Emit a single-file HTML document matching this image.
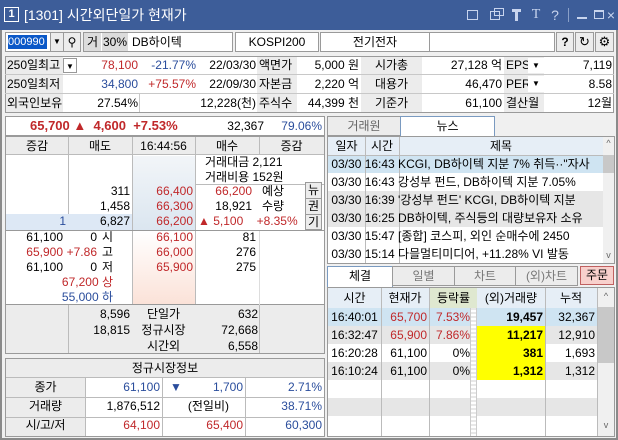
<!DOCTYPE html>
<html><head><meta charset="utf-8"><style>
*{margin:0;padding:0;box-sizing:border-box}
body{width:618px;height:440px;overflow:hidden;background:#f0f0f0;font-family:"Liberation Sans","Noto Sans CJK KR",sans-serif;font-size:12px;color:#000;position:relative}
.a{position:absolute;white-space:nowrap;overflow:hidden}
.b{border:1px solid #9a9a9a}
.r{text-align:right}.c{text-align:center}
.red{color:#c0282a}.blue{color:#2a4d9c}
.g{background:#ececec}
.w{background:#fff}
.ti{position:absolute;top:6px;color:#c8d4ee;font-size:14px;line-height:18px;width:16px;text-align:center}
</style></head><body>
<div class="a" style="left:0;top:0;width:618px;height:440px;border:2px solid #8a8a8a;background:#f0f0f0"></div>
<div class="a" style="left:0;top:0;width:618px;height:30px;background:#3d5d99;color:#fff;font-size:14px;line-height:30px;padding-left:24px">[1301] 시간외단일가 현재가</div>
<div class="a" style="left:4px;top:7px;width:15px;height:15px;border:1px solid #fff;color:#fff;font-size:11px;line-height:13px;text-align:center;font-weight:bold">1</div>
<div class="a" style="left:467px;top:10px;width:11px;height:10px;border:1px solid #c8d4ee"></div>
<div class="a" style="left:490px;top:11px;width:10px;height:9px;border:1px solid #c8d4ee"></div>
<div class="a" style="left:494px;top:8px;width:10px;height:8px;border:1px solid #c8d4ee"></div>
<div class="a" style="left:512px;top:9px;width:9px;height:3px;background:#c8d4ee"></div>
<div class="a" style="left:515px;top:12px;width:3px;height:9px;background:#c8d4ee"></div>
<div class="ti" style="left:528px;font-family:'Liberation Serif',serif">T</div>
<div class="ti" style="left:547px">?</div>
<div class="a" style="left:568px;top:8px;width:1px;height:14px;background:#8aa0c8"></div>
<div class="a" style="left:577px;top:17px;width:10px;height:2px;background:#c8d4ee"></div>
<div class="a" style="left:594px;top:10px;width:10px;height:9px;border:1px solid #c8d4ee;border-top-width:2px"></div>
<div class="ti" style="left:603px">×</div>

<!-- toolbar -->
<div class="a b w" style="left:5px;top:32px;width:46px;height:20px"></div>
<div class="a" style="left:8px;top:35px;width:39px;height:14px;background:#0a58c8;color:#fff;font-size:11px;line-height:14px">000990</div>
<div class="a b g c" style="left:50px;top:32px;width:14px;height:20px;font-size:8px;line-height:18px">▼</div>
<div class="a b g c" style="left:63px;top:32px;width:18px;height:20px;font-size:12px;line-height:18px">⚲</div>
<div class="a b w" style="left:83px;top:32px;width:150px;height:20px"></div>
<div class="a" style="left:84px;top:33px;width:17px;height:18px;background:#dcdcdc;line-height:18px;text-align:center">거</div>
<div class="a" style="left:102px;top:33px;width:26px;height:18px;background:#dcdcdc;line-height:18px;text-align:center">30%</div>
<div class="a" style="left:132px;top:33px;line-height:18px">DB하이텍</div>
<div class="a b w c" style="left:235px;top:32px;width:84px;height:20px;line-height:18px">KOSPI200</div>
<div class="a b w c" style="left:320px;top:32px;width:110px;height:20px;line-height:18px">전기전자</div>
<div class="a b w" style="left:429px;top:32px;width:126px;height:20px"></div>
<div class="a b g c" style="left:556px;top:32px;width:18px;height:20px;line-height:18px;font-weight:bold">?</div>
<div class="a b g c" style="left:575px;top:32px;width:19px;height:20px;line-height:18px;font-size:13px">↻</div>
<div class="a b g c" style="left:595px;top:32px;width:19px;height:20px;line-height:18px;font-size:13px">⚙</div>

<!-- info table -->
<div class="a b w" style="left:5px;top:56px;width:609px;height:57px"></div>
<div class="a g" style="left:6px;top:57px;width:57px;height:55px"></div>
<div class="a g" style="left:257px;top:57px;width:40px;height:55px"></div>
<div class="a g" style="left:361px;top:57px;width:61px;height:55px"></div>
<div class="a g" style="left:504px;top:57px;width:40px;height:55px"></div>
<div class="a" style="left:5px;top:74px;width:609px;height:1px;background:#c8c8c8"></div>
<div class="a" style="left:5px;top:93px;width:609px;height:1px;background:#c8c8c8"></div>
<div class="a" style="left:7px;top:57px;line-height:17px">250일최고</div>
<div class="a w c" style="left:63px;top:58px;width:14px;height:15px;font-size:8px;line-height:15px;border:1px solid #999">▼</div>
<div class="a" style="left:7px;top:75px;line-height:18px">250일최저</div>
<div class="a" style="left:7px;top:94px;line-height:18px">외국인보유</div>
<div class="a r red" style="left:78px;top:57px;width:60px;line-height:17px">78,100</div>
<div class="a r blue" style="left:138px;top:57px;width:58px;line-height:17px">-21.77%</div>
<div class="a r" style="left:196px;top:57px;width:60px;line-height:17px">22/03/30</div>
<div class="a r blue" style="left:78px;top:75px;width:60px;line-height:18px">34,800</div>
<div class="a r red" style="left:138px;top:75px;width:58px;line-height:18px">+75.57%</div>
<div class="a r" style="left:196px;top:75px;width:60px;line-height:18px">22/09/30</div>
<div class="a r" style="left:78px;top:94px;width:60px;line-height:18px">27.54%</div>
<div class="a r" style="left:140px;top:94px;width:116px;line-height:18px">12,228(천)</div>
<div class="a" style="left:139px;top:94px;width:1px;height:18px;background:#c8c8c8"></div>
<div class="a" style="left:259px;top:57px;line-height:17px">액면가</div>
<div class="a" style="left:259px;top:75px;line-height:18px">자본금</div>
<div class="a" style="left:259px;top:94px;line-height:18px">주식수</div>
<div class="a r" style="left:297px;top:57px;width:62px;line-height:17px">5,000 원</div>
<div class="a r" style="left:297px;top:75px;width:62px;line-height:18px">2,220 억</div>
<div class="a r" style="left:297px;top:94px;width:62px;line-height:18px">44,399 천</div>
<div class="a c" style="left:361px;top:57px;width:61px;line-height:17px">시가총</div>
<div class="a c" style="left:361px;top:75px;width:61px;line-height:18px">대용가</div>
<div class="a c" style="left:361px;top:94px;width:61px;line-height:18px">기준가</div>
<div class="a r" style="left:422px;top:57px;width:80px;line-height:17px">27,128 억</div>
<div class="a r" style="left:422px;top:75px;width:80px;line-height:18px">46,470</div>
<div class="a r" style="left:422px;top:94px;width:80px;line-height:18px">61,100</div>
<div class="a" style="left:506px;top:57px;line-height:17px">EPS</div>
<div class="a" style="left:506px;top:75px;line-height:18px">PER</div>
<div class="a" style="left:506px;top:94px;line-height:18px">결산월</div>
<div class="a w c" style="left:528px;top:58px;width:16px;height:15px;font-size:8px;line-height:15px">▼</div>
<div class="a w c" style="left:528px;top:76px;width:16px;height:16px;font-size:8px;line-height:16px">▼</div>
<div class="a r" style="left:545px;top:57px;width:67px;line-height:17px">7,119</div>
<div class="a r" style="left:545px;top:75px;width:67px;line-height:18px">8.58</div>
<div class="a r" style="left:545px;top:94px;width:67px;line-height:18px">12월</div>

<!-- price bar -->
<div class="a b w" style="left:5px;top:116px;width:320px;height:20px"></div>
<div class="a red" style="left:30px;top:117px;line-height:18px;font-weight:bold;font-size:13px">65,700 ▲ &nbsp;4,600 &nbsp;+7.53%</div>
<div class="a r" style="left:220px;top:117px;width:44px;line-height:18px">32,367</div>
<div class="a r blue" style="left:264px;top:117px;width:58px;line-height:18px">79.06%</div>

<!-- orderbook -->
<div class="a b w" style="left:5px;top:136px;width:320px;height:218px"></div>
<div class="a g" style="left:6px;top:137px;width:318px;height:18px;border-bottom:1px solid #bbb"></div>
<div class="a c" style="left:6px;top:137px;width:62px;line-height:18px">증감</div>
<div class="a c" style="left:68px;top:137px;width:64px;line-height:18px">매도</div>
<div class="a c" style="left:132px;top:137px;width:63px;line-height:18px">16:44:56</div>
<div class="a c" style="left:195px;top:137px;width:64px;line-height:18px">매수</div>
<div class="a c" style="left:259px;top:137px;width:65px;line-height:18px">증감</div>
<div class="a" style="left:68px;top:137px;width:1px;height:93px;background:#bbb"></div>
<div class="a" style="left:132px;top:137px;width:1px;height:216px;background:#bbb"></div>
<div class="a" style="left:195px;top:137px;width:1px;height:216px;background:#bbb"></div>
<div class="a" style="left:259px;top:137px;width:1px;height:18px;background:#bbb"></div>
<div class="a" style="left:133px;top:156px;width:62px;height:74px;background:linear-gradient(#f2f5f8,#dbe6f0)"></div>
<div class="a" style="left:133px;top:231px;width:62px;height:73px;background:linear-gradient(#fff,#fbe2d8)"></div>
<div class="a" style="left:6px;top:214px;width:126px;height:16px;background:#dde8f5"></div>
<div class="a" style="left:6px;top:230px;width:318px;height:1px;background:#999"></div>
<div class="a" style="left:6px;top:304px;width:318px;height:1px;background:#999"></div>
<div class="a g" style="left:6px;top:305px;width:318px;height:48px"></div>
<div class="a" style="left:68px;top:305px;width:1px;height:48px;background:#bbb"></div>
<div class="a" style="left:259px;top:305px;width:1px;height:48px;background:#bbb"></div>
<div class="a" style="left:259px;top:231px;width:1px;height:74px;background:#ddd"></div>
<div class="a" style="left:196px;top:184px;width:128px;height:1px;background:#bbb"></div>
<div class="a" style="left:205px;top:155px;line-height:15px">거래대금 2,121<br>거래비용 152원</div>
<div class="a r" style="left:68px;top:184px;width:62px;line-height:15px">311<br>1,458<br>6,827</div>
<div class="a r red" style="left:132px;top:184px;width:61px;line-height:15px">66,400<br>66,300<br>66,200</div>
<div class="a r blue" style="left:6px;top:214px;width:60px;line-height:15px">1</div>
<div class="a r red" style="left:196px;top:184px;width:56px;line-height:15px">66,200</div>
<div class="a" style="left:262px;top:184px;line-height:15px">예상</div>
<div class="a r" style="left:196px;top:199px;width:56px;line-height:15px">18,921</div>
<div class="a" style="left:262px;top:199px;line-height:15px">수량</div>
<div class="a red" style="left:198px;top:214px;line-height:15px">▲ 5,100 &nbsp;&nbsp;&nbsp;+8.35%</div>
<div class="a b g c" style="left:305px;top:182px;width:17px;height:17px;line-height:15px">뉴</div>
<div class="a b g c" style="left:305px;top:198px;width:17px;height:17px;line-height:15px">권</div>
<div class="a b g c" style="left:305px;top:214px;width:17px;height:16px;line-height:14px">기</div>
<div class="a r" style="left:6px;top:230px;width:57px;line-height:15px">61,100<br><span class="red">65,900</span><br>61,100</div>
<div class="a r" style="left:63px;top:230px;width:34px;line-height:15px">0<br><span class="red">+7.86</span><br>0</div>
<div class="a" style="left:102px;top:230px;line-height:15px">시<br>고<br>저</div>
<div class="a r red" style="left:6px;top:275px;width:107px;line-height:15px">67,200 상</div>
<div class="a r blue" style="left:6px;top:290px;width:107px;line-height:15px">55,000 하</div>
<div class="a r red" style="left:132px;top:230px;width:61px;line-height:15px">66,100<br>66,000<br>65,900</div>
<div class="a r" style="left:196px;top:230px;width:60px;line-height:15px">81<br>276<br>275</div>
<div class="a r" style="left:68px;top:306px;width:62px;line-height:16px">8,596<br>18,815</div>
<div class="a c" style="left:132px;top:306px;width:63px;line-height:16px">단일가<br>정규시장<br>시간외</div>
<div class="a r" style="left:196px;top:306px;width:62px;line-height:16px">632<br>72,668<br>6,558</div>

<!-- 정규시장정보 -->
<div class="a b w" style="left:5px;top:358px;width:320px;height:79px"></div>
<div class="a g c" style="left:6px;top:359px;width:318px;height:19px;line-height:19px;border-bottom:1px solid #bbb">정규시장정보</div>
<div class="a g" style="left:6px;top:378px;width:79px;height:58px"></div>
<div class="a" style="left:6px;top:397px;width:318px;height:1px;background:#bbb"></div>
<div class="a" style="left:6px;top:417px;width:318px;height:1px;background:#bbb"></div>
<div class="a" style="left:85px;top:378px;width:1px;height:58px;background:#bbb"></div>
<div class="a" style="left:162px;top:378px;width:1px;height:58px;background:#bbb"></div>
<div class="a" style="left:245px;top:378px;width:1px;height:58px;background:#bbb"></div>
<div class="a c" style="left:6px;top:378px;width:79px;line-height:19px">종가<br>거래량<br>시/고/저</div>
<div class="a r" style="left:85px;top:378px;width:75px;line-height:19px"><span class="blue">61,100</span><br>1,876,512<br><span class="red">64,100</span></div>
<div class="a blue" style="left:170px;top:378px;line-height:19px">▼</div>
<div class="a r" style="left:162px;top:378px;width:81px;line-height:19px"><span class="blue">1,700</span><br><span style="padding-right:14px">(전일비)</span><br><span class="red">65,400</span></div>
<div class="a r blue" style="left:245px;top:378px;width:77px;line-height:19px">2.71%<br>38.71%<br>60,300</div>

<!-- right: tabs -->
<div class="a g c b" style="left:327px;top:116px;width:74px;height:20px;line-height:18px;color:#666">거래원</div>
<div class="a w c" style="left:400px;top:116px;width:95px;height:21px;line-height:18px;border:1px solid #7a9ac0;border-bottom:none">뉴스</div>
<div class="a b w" style="left:327px;top:136px;width:288px;height:128px"></div>
<div class="a" style="left:328px;top:137px;width:275px;height:18px;background:#e6eef6"></div>
<div class="a c" style="left:328px;top:137px;width:37px;line-height:18px">일자</div>
<div class="a c" style="left:365px;top:137px;width:34px;line-height:18px">시간</div>
<div class="a c" style="left:399px;top:137px;width:204px;line-height:18px">제목</div>
<div class="a" style="left:328px;top:155px;width:275px;height:18px;background:#cfe4f2"></div>
<div class="a" style="left:328px;top:191px;width:275px;height:18px;background:#e6e6e6"></div>
<div class="a" style="left:328px;top:209px;width:275px;height:18px;background:#e6e6e6"></div>
<div class="a" style="left:365px;top:137px;width:1px;height:126px;background:#bbb"></div>
<div class="a" style="left:399px;top:137px;width:1px;height:126px;background:#bbb"></div>
<div class="a" style="left:328px;top:155px;width:275px;height:1px;background:#bbb"></div>
<div class="a" style="left:328px;top:155px;width:275px;line-height:18px">
<div>&nbsp;03/30 16:43 KCGI, DB하이텍 지분 7% 취득··"자사</div>
<div>&nbsp;03/30 16:43 강성부 펀드, DB하이텍 지분 7.05%</div>
<div>&nbsp;03/30 16:39 '강성부 펀드' KCGI, DB하이텍 지분</div>
<div>&nbsp;03/30 16:25 DB하이텍, 주식등의 대량보유자 소유</div>
<div>&nbsp;03/30 15:47 [종합] 코스피, 외인 순매수에 2450</div>
<div>&nbsp;03/30 15:14 다믈멀티미디어, +11.28% VI 발동</div></div>
<div class="a" style="left:603px;top:137px;width:11px;height:126px;background:#f0f0f0;font-size:9px;color:#666;text-align:center;line-height:12px">^</div>
<div class="a" style="left:603px;top:155px;width:11px;height:18px;background:#c8c8c8"></div>
<div class="a" style="left:603px;top:250px;width:11px;font-size:9px;color:#666;text-align:center">v</div>

<!-- bottom tabs -->
<div class="a w c" style="left:327px;top:266px;width:66px;height:21px;line-height:19px;border:1px solid #7a9ac0;border-bottom:none">체결</div>
<div class="a g c b" style="left:392px;top:266px;width:63px;height:20px;line-height:18px;color:#777">일별</div>
<div class="a g c b" style="left:454px;top:266px;width:62px;height:20px;line-height:18px;color:#777">차트</div>
<div class="a g c b" style="left:515px;top:266px;width:63px;height:20px;line-height:18px;color:#777">(외)차트</div>
<div class="a c" style="left:580px;top:266px;width:34px;height:19px;line-height:17px;background:#f8d0cc;border:1px solid #c06060">주문</div>

<!-- trade table -->
<div class="a b w" style="left:327px;top:287px;width:288px;height:150px"></div>
<div class="a" style="left:328px;top:288px;width:270px;height:20px;background:#e6eef6"></div>
<div class="a" style="left:430px;top:288px;width:47px;height:20px;background:#dfe8d0"></div>
<div class="a" style="left:328px;top:308px;width:270px;height:18px;background:#cfe4f2"></div>
<div class="a" style="left:328px;top:326px;width:270px;height:18px;background:#e6e6e6"></div>
<div class="a" style="left:328px;top:362px;width:270px;height:18px;background:#e6e6e6"></div>
<div class="a" style="left:328px;top:398px;width:270px;height:18px;background:#e6e6e6"></div>
<div class="a" style="left:477px;top:326px;width:68px;height:54px;background:#ffff00"></div>
<div class="a" style="left:381px;top:288px;width:1px;height:148px;background:#bbb"></div>
<div class="a" style="left:429px;top:288px;width:1px;height:148px;background:#bbb"></div>
<div class="a" style="left:470px;top:308px;width:7px;height:128px;background:repeating-linear-gradient(#e8e8e8 0 2px,#fff 2px 4px);border-left:1px solid #ccc;border-right:1px solid #ccc"></div>
<div class="a" style="left:545px;top:288px;width:1px;height:148px;background:#bbb"></div>
<div class="a" style="left:597px;top:288px;width:1px;height:148px;background:#bbb"></div>
<div class="a c" style="left:328px;top:288px;width:53px;line-height:20px">시간</div>
<div class="a c" style="left:381px;top:288px;width:48px;line-height:20px">현재가</div>
<div class="a c" style="left:430px;top:288px;width:47px;line-height:20px">등락률</div>
<div class="a c" style="left:477px;top:288px;width:68px;line-height:20px">(외)거래량</div>
<div class="a c" style="left:545px;top:288px;width:52px;line-height:20px">누적</div>
<div class="a c" style="left:328px;top:308px;width:53px;line-height:18px">16:40:01<br>16:32:47<br>16:20:28<br>16:10:24</div>
<div class="a r" style="left:381px;top:308px;width:46px;line-height:18px"><span class="red">65,700</span><br><span class="red">65,900</span><br>61,100<br>61,100</div>
<div class="a r" style="left:430px;top:308px;width:40px;line-height:18px"><span class="red">7.53%</span><br><span class="red">7.86%</span><br>0%<br>0%</div>
<div class="a r" style="left:477px;top:308px;width:66px;line-height:18px;font-weight:bold">19,457<br>11,217<br>381<br>1,312</div>
<div class="a r" style="left:545px;top:308px;width:50px;line-height:18px">32,367<br>12,910<br>1,693<br>1,312</div>
<div class="a" style="left:598px;top:288px;width:16px;height:148px;background:#f0f0f0;font-size:9px;color:#666;text-align:center;line-height:16px">^</div>
<div class="a" style="left:598px;top:307px;width:16px;height:56px;background:#c8c8c8"></div>
<div class="a" style="left:598px;top:420px;width:16px;font-size:9px;color:#666;text-align:center">v</div>
</body></html>
